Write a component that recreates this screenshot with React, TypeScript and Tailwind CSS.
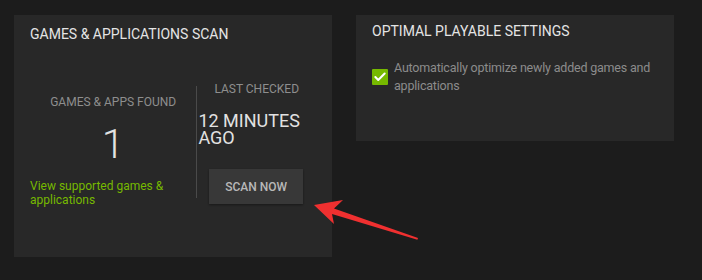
import { Check } from 'lucide-react';

export default function App() {
  return (
    <div
      className="w-[702px] h-[280px] bg-[#1c1c1c] flex items-start gap-[24px] pl-[14px] pt-[15px]"
      style={{ fontFamily: 'Roboto, "Liberation Sans", sans-serif' }}
    >
      {/* Games & applications scan */}
      <div className="w-[318px] h-[242px] bg-[#282828] px-[16px] pt-[9px]">
        <h2 className="text-[14px] leading-[20px] text-[#e4e4e4]">GAMES &amp; APPLICATIONS SCAN</h2>

        <div className="flex items-start mt-[36px]">
          <div className="w-[168px] h-[112px] mt-[6px] border-r border-[#4a4a4a] pt-[8px] flex flex-col">
            <p className="text-[12px] leading-[16px] text-[#8e8e8e] text-center">GAMES &amp; APPS FOUND</p>
            <p className="text-[41px] leading-[41px] font-light text-[#e2e2e2] text-center mt-[14px]">1</p>
            <a className="text-[12px] leading-[14px] text-[#76b900] mt-[14px] pr-[20px]">
              View supported games &amp; applications
            </a>
          </div>

          <div className="w-[119px] flex flex-col">
            <p className="text-[12px] leading-[16px] text-[#8e8e8e] text-center mt-[1px]">LAST CHECKED</p>
            <p className="text-[18px] leading-[17px] text-[#e2e2e2] mt-[15px] pl-[1px]">
              12 MINUTES
              <br />
              AGO
            </p>
            <button className="self-center ml-[-1px] mt-[23px] w-[94px] h-[35px] bg-[#383838] text-[12px] font-medium text-[#b8b8b8] shadow-[0_1px_2px_rgba(0,0,0,0.4)]">
              SCAN NOW
            </button>
          </div>
        </div>
      </div>

      {/* Optimal playable settings */}
      <div className="w-[318px] h-[126px] bg-[#282828] pl-[16px] pr-[12px] pt-[6px]">
        <h2 className="text-[14px] leading-[20px] text-[#e4e4e4]">OPTIMAL PLAYABLE SETTINGS</h2>
        <div className="flex items-center gap-[6px] mt-[18px]">
          <span className="w-[16px] h-[16px] bg-[#76b900] rounded-[1px] flex items-center justify-center shrink-0">
            <Check className="w-[14px] h-[14px] text-white" strokeWidth={3.5} />
          </span>
          <p className="text-[12.5px] leading-[18px] tracking-[-0.2px] text-[#8c8c8c]">
            Automatically optimize newly added games and applications
          </p>
        </div>
      </div>

      {/* annotation arrow */}
      <svg className="absolute left-0 top-0 pointer-events-none" width="702" height="280">
        <polygon
          points="314,205 343,200 334,208.6 418,238 417.4,239.8 332,214 334,224"
          fill="#f03030"
        />
      </svg>
    </div>
  );
}
